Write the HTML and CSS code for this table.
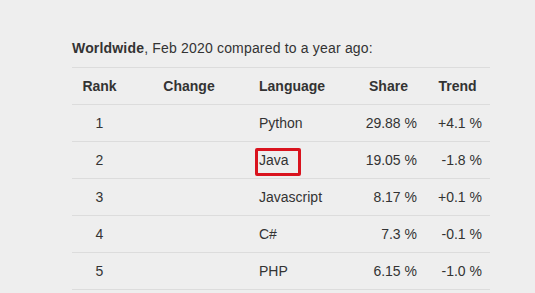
FILE: index.html
```html
<!DOCTYPE html>
<html>
<head>
<meta charset="utf-8">
<link rel="stylesheet" href="styles.css">
</head>
<body>
<div class="wrap">
  <p class="intro"><b>Worldwide</b>, Feb 2020 compared to a year ago:</p>
  <table class="rank-table">
    <colgroup>
      <col class="c-rank"><col class="c-change"><col class="c-lang"><col class="c-share"><col class="c-trend">
    </colgroup>
    <thead>
      <tr><th>Rank</th><th>Change</th><th class="left">Language</th><th>Share</th><th>Trend</th></tr>
    </thead>
    <tbody>
      <tr><td class="center">1</td><td></td><td>Python</td><td class="right">29.88 %</td><td class="right">+4.1 %</td></tr>
      <tr><td class="center">2</td><td></td><td><span class="mark">Java</span></td><td class="right">19.05 %</td><td class="right">-1.8 %</td></tr>
      <tr><td class="center">3</td><td></td><td>Javascript</td><td class="right">8.17 %</td><td class="right">+0.1 %</td></tr>
      <tr><td class="center">4</td><td></td><td>C#</td><td class="right">7.3 %</td><td class="right">-0.1 %</td></tr>
      <tr><td class="center">5</td><td></td><td>PHP</td><td class="right">6.15 %</td><td class="right">-1.0 %</td></tr>
    </tbody>
  </table>
</div>
</body>
</html>
```

FILE: styles.css
```css
html, body {
  margin: 0;
  padding: 0;
  background: #eeeeee;
}
body {
  font-family: "Liberation Sans", Arial, sans-serif;
  font-size: 14px;
  line-height: 20px;
  color: #333333;
}
.wrap {
  padding: 38px 0 0 72px;
  width: 418px;
}
.intro {
  margin: 0 0 9px 0;
  letter-spacing: 0.18px;
}
.intro b {
  font-weight: bold;
}
.rank-table {
  width: 418px;
  border-collapse: collapse;
  table-layout: fixed;
  border-bottom: 1px solid #dcdcdc;
}
.c-rank { width: 55px; }
.c-change { width: 124px; }
.c-lang { width: 101px; }
.c-share { width: 73px; }
.c-trend { width: 65px; }
.rank-table th,
.rank-table td {
  padding: 8px;
  border-top: 1px solid #dcdcdc;
  height: 20px;
  white-space: nowrap;
}
.rank-table th {
  font-weight: bold;
  text-align: center;
}
.rank-table th.left { text-align: left; }
.rank-table td { text-align: left; }
.rank-table td.center { text-align: center; }
.rank-table td.right { text-align: right; }
.mark {
  position: relative;
}
.mark::after {
  content: "";
  position: absolute;
  left: -4px;
  top: -4px;
  width: 40px;
  height: 22px;
  border: 3px solid #d9131e;
  border-radius: 2px;
}
```
